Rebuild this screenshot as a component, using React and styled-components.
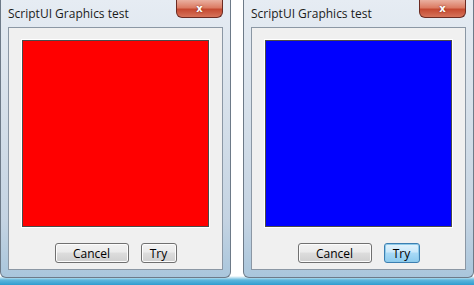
import React from 'react';
import styled, { createGlobalStyle } from 'styled-components';

const Global = createGlobalStyle`
  html, body {
    margin: 0;
    padding: 0;
    background: #ffffff;
    font-family: "Open Sans", "Noto Sans", sans-serif;
  }
`;

const Desk = styled.div`
  display: flex;
  gap: 12px;
  width: 474px;
  height: 285px;
  overflow: hidden;
  background: linear-gradient(to bottom, #ffffff 0, #ffffff 276px, #5fb6dc 280px, #2e9ccf 285px);
`;

const Win = styled.div`
  width: ${p => p.w}px;
  height: 278px;
  flex: none;
  box-sizing: border-box;
  display: flex;
  flex-direction: column;
  border: 1px solid #6d7a88;
  border-top: none;
  border-radius: 0 0 6px 6px;
  background: linear-gradient(to bottom, #e6ecf3 0%, #d6e0ea 40%, #c4d3e2 80%, #a9c6dc 100%);
  padding: 0 7px 7px 7px;
`;

const TitleBar = styled.div`
  height: 27px;
  display: flex;
  align-items: flex-start;
  justify-content: space-between;
`;

const Title = styled.span`
  font-size: 12px;
  color: #1b1b1b;
  margin-top: 5px;
`;

const Close = styled.div`
  width: 47px;
  height: 18px;
  box-sizing: border-box;
  border: 1px solid #6b2b22;
  border-top: none;
  border-radius: 0 0 6px 6px;
  background: linear-gradient(to bottom, #eab0a0 0%, #dc7c64 45%, #c54a31 55%, #d6735a 100%);
  display: flex;
  align-items: center;
  justify-content: center;
  color: #ffffff;
  font-family: "DejaVu Sans", sans-serif;
  font-size: 10px;
  font-weight: bold;
  text-shadow: 0 0 2px #7a2a1a;
`;

const Client = styled.div`
  flex: 1;
  background: #f0f0f0;
  border: 1px solid #8b97a4;
  display: flex;
  flex-direction: column;
  align-items: center;
  padding-top: 12px;
`;

const Canvas = styled.div`
  width: 185px;
  height: 185px;
  background: ${p => p.fill};
  border: 1px solid #4a4a4a;
  box-shadow: 0 0 0 1px #ffffff;
`;

const Buttons = styled.div`
  display: flex;
  gap: 12px;
  margin-top: 16px;
`;

const Btn = styled.div`
  height: 20px;
  width: ${p => p.w}px;
  box-sizing: border-box;
  border: 1px solid ${p => (p.hot ? '#3c7fb1' : '#707070')};
  border-radius: 3px;
  background: ${p =>
    p.hot
      ? 'linear-gradient(to bottom, #e3f3fc 0%, #c9e8fa 45%, #a9daf6 50%, #8ccbee 100%)'
      : 'linear-gradient(to bottom, #f2f2f2 0%, #ebebeb 45%, #dddddd 50%, #cfcfcf 100%)'};
  box-shadow: inset 0 0 0 1px ${p => (p.hot ? '#8fcbea' : '#fcfcfc')};
  display: flex;
  align-items: center;
  justify-content: center;
  font-size: 12px;
  color: #000;
`;

function Dialog({ fill, w, hot }) {
  return (
    <Win w={w}>
      <TitleBar>
        <Title>ScriptUI Graphics test</Title>
        <Close>x</Close>
      </TitleBar>
      <Client>
        <Canvas fill={fill} />
        <Buttons>
          <Btn w={74}>Cancel</Btn>
          <Btn w={36} hot={hot}>Try</Btn>
        </Buttons>
      </Client>
    </Win>
  );
}

export default function App() {
  return (
    <>
      <Global />
      <Desk>
        <Dialog fill="#ff0000" w={231} />
        <Dialog fill="#0000ff" w={231} hot />
      </Desk>
    </>
  );
}
